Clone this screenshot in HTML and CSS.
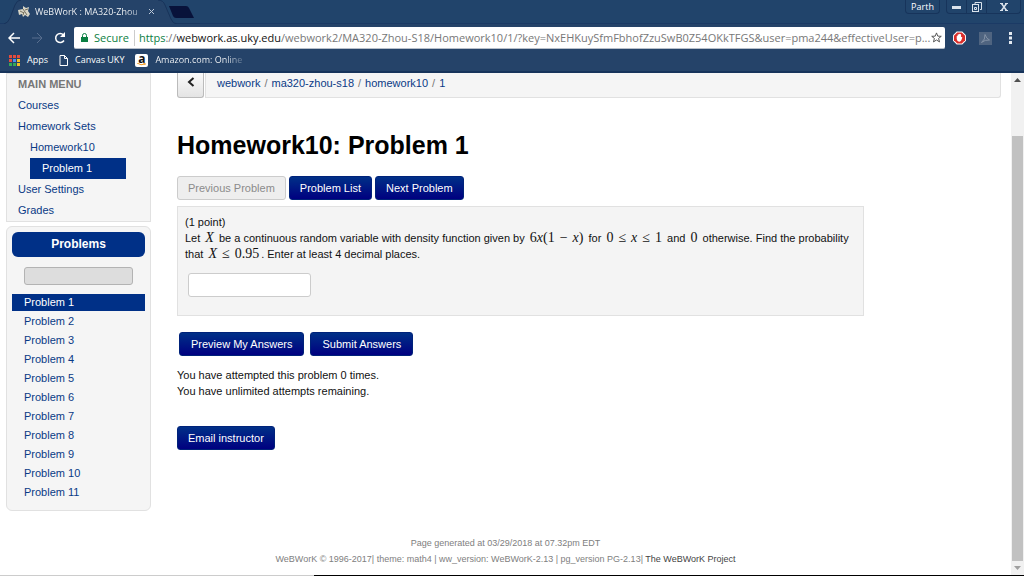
FILE: index.html
```html
<!DOCTYPE html>
<html lang="en">
<head>
<meta charset="utf-8">
<title>WeBWorK : MA320-Zhou-S18 : Homework10 : 1</title>
<link rel="stylesheet" href="styles.css">
</head>
<body>
<header class="browser">
  <div class="titlebar">
    <svg class="tab-shape" width="196" height="24" viewBox="0 0 196 24" aria-hidden="true">
      <path d="M0 24 Q4 23 6 18 L11 5 Q13 0 17 0 H154 Q159 0 161 5 L167 19 Q169 24 173 24Z" fill="#254369"/>
      <path d="M0 24 Q4 23 6 18 L11 5 Q13 0 17 0M154 0 Q159 0 161 5 L167 19 Q169 24 173 24H196" fill="none" stroke="#18335a"/>
      <path d="M165 6H182Q184 6 185 8L190 18H172Q170 18 169 16Z" fill="#08123a"/>
    </svg>
    <div class="tab">
      <svg width="12" height="12" viewBox="0 0 12 12" aria-hidden="true"><path d="M0 4 5 3 5 0 8 2 11 1 10 5 12 8 10 11 7 9 5 11 4 8 1 9Z" fill="#d8d5c6"/><path d="M2 5 6 7M5 3 9 9M7 4 10 3M5 9 6 6" stroke="#777260"/></svg>
      <span class="tab-title">WeBWorK : MA320-Zhou</span>
      <button class="plain tab-close" aria-label="Close tab"><svg width="7" height="7" viewBox="0 0 7 7"><path d="M1 1 6 6M6 1 1 6" stroke="#bdc9d8"/></svg></button>
    </div>
    <div class="window-tools">
      <button class="user">Parth</button>
      <div class="window-buttons">
        <button aria-label="Minimize"><svg width="9" height="9" viewBox="0 0 9 9"><path d="M0 4H9V7H0Z" fill="#dbe3ec"/></svg></button>
        <button aria-label="Restore"><svg width="10" height="10" viewBox="0 0 10 10" fill="none" stroke="#dbe3ec"><path d="M3 2.500V.5H9.500V7.500H8"/><rect x=".5" y="2.500" width="6" height="7"/><path d="M2.500 5.500H4.500V7.500H2.500Z"/></svg></button>
        <button class="close" aria-label="Close"><svg width="8" height="8" viewBox="0 0 8 8"><path d="M1.500 .5 6.500 7.500M6.500 .5 1.500 7.500" stroke="#dbe3ec" stroke-width="1.500"/><path d="M0 .5H3M5 .5H8M0 7.500H3M5 7.500H8" stroke="#dbe3ec"/></svg></button>
      </div>
    </div>
  </div>
  <div class="toolbar">
    <div class="nav-icons">
      <button class="plain" aria-label="Back"><svg width="12" height="12" viewBox="0 0 12 12"><path d="M6 1 1 6 6 11M1 6H12" fill="none" stroke="#fff" stroke-width="1.500"/></svg></button>
      <button class="plain" aria-label="Forward"><svg width="12" height="12" viewBox="0 0 12 12"><path d="M6 1 11 6 6 11M11 6H1" fill="none" stroke="#596f8f"/></svg></button>
      <button class="plain" aria-label="Reload"><svg width="12" height="12" viewBox="0 0 12 12"><path d="M10 8.500A4.500 4.500 0 1 1 9.500 3" fill="none" stroke="#fff" stroke-width="1.500"/><path d="M11 0V5H6Z" fill="#fff"/></svg></button>
    </div>
    <div class="omnibox">
      <svg width="7" height="9" viewBox="0 0 7 9" aria-hidden="true"><path d="M0 4H7V9H0Z" fill="#0b8043"/><path d="M1.500 4V2.500a2 2 0 0 1 4 0V4" fill="none" stroke="#0b8043"/></svg>
      <span class="secure">Secure</span>
      <div class="url" role="textbox" aria-label="Address" tabindex="0"><span class="scheme">https</span>://<span class="host">webwork.as.uky.edu</span>/webwork2/MA320-Zhou-S18/Homework10/1/?key=NxEHKuySfmFbhofZzuSwB0Z54OKkTFGS&amp;user=pma244&amp;effectiveUser=p...</div>
      <button class="plain" aria-label="Bookmark this page"><svg width="11" height="11" viewBox="0 0 12 12"><path d="M6 1 7.400 4.500 11.200 4.700 8.300 7 9.300 10.800 6 8.700 2.700 10.800 3.700 7 .8 4.700 4.600 4.500Z" fill="none" stroke="#4a4a4a"/></svg></button>
    </div>
    <div class="extensions">
      <button class="plain" aria-label="Ad blocker"><svg width="13" height="14" viewBox="0 0 14 14"><path d="M4 0H10L14 4V10L10 14H4L0 10V4Z" fill="#fff"/><path d="M4.500 1H9.500L13 4.500V9.500L9.500 13H4.500L1 9.500V4.500Z" fill="#d92c29"/><path d="M4 5Q4.500 4 5 5V3.500Q5.500 2.500 6 3.500Q6.500 1.500 7.500 3Q8.500 2 8.700 3.500V6Q10 5.500 10 6.500Q9 11 6.500 11Q4.500 11 4 8Z" fill="#fff"/></svg></button>
      <button class="plain" aria-label="PDF"><svg width="13" height="13" viewBox="0 0 13 13"><path d="M0 0H13V13H0Z" fill="#4f6480"/><path d="M6 2.500Q7.500 7 10.500 8Q6 7.500 2.500 10.500Q6.500 7.500 6 2.500Z" fill="none" stroke="#8392a6"/></svg></button>
      <button class="plain" aria-label="Menu"><svg width="3" height="12" viewBox="0 0 3 12" fill="#e4eaf1"><path d="M0 0H3V3H0ZM0 4.500H3V7.500H0ZM0 9H3V12H0Z"/></svg></button>
    </div>
  </div>
  <nav class="bookmarks" aria-label="Bookmarks">
    <a href="#"><svg width="11" height="11" viewBox="0 0 11 11" aria-hidden="true"><path d="M0 0H3V3H0ZM4 0H7V3H4ZM8 0H11V3H8ZM0 4H3V7H0Z" fill="#e54b3c"/><path d="M4 4H7V7H4Z" fill="#4a8df0"/><path d="M0 8H3V11H0ZM4 8H7V11H4Z" fill="#35a955"/><path d="M8 4H11V7H8ZM8 8H11V11H8Z" fill="#f3bd26"/></svg>Apps</a>
    <a href="#"><svg width="9" height="11" viewBox="0 0 9 11" aria-hidden="true"><path d="M1 .5H5.500L8.500 3.500V10.500H1ZM5.500 .5V3.500H8.500" fill="none" stroke="#fff"/></svg>Canvas UKY</a>
    <a href="#"><span class="amazon">a<svg width="9" height="3" viewBox="0 0 9 3"><path d="M0 0Q4 3 8 1M6 0H8V2" fill="none" stroke="#f19a20"/></svg></span><span class="amazon-title">Amazon.com: Online</span></a>
  </nav>
</header>

<div class="viewport">
  <div class="page">
    <div class="columns">
      <aside class="sidebar">
        <nav class="main-menu" aria-label="Main menu">
          <h2>MAIN MENU</h2>
          <a href="#">Courses</a>
          <a href="#">Homework Sets</a>
          <a class="level-2" href="#">Homework10</a>
          <a class="level-3 active" href="#">Problem 1</a>
          <a href="#">User Settings</a>
          <a href="#">Grades</a>
        </nav>
        <nav class="problems" aria-label="Problems">
          <h2>Problems</h2>
          <div class="progress"></div>
          <ul>
            <li><a class="active" href="#">Problem 1</a></li>
            <li><a href="#">Problem 2</a></li>
            <li><a href="#">Problem 3</a></li>
            <li><a href="#">Problem 4</a></li>
            <li><a href="#">Problem 5</a></li>
            <li><a href="#">Problem 6</a></li>
            <li><a href="#">Problem 7</a></li>
            <li><a href="#">Problem 8</a></li>
            <li><a href="#">Problem 9</a></li>
            <li><a href="#">Problem 10</a></li>
            <li><a href="#">Problem 11</a></li>
          </ul>
        </nav>
      </aside>
      <main class="content">
        <div class="trail">
          <button class="up" aria-label="Back to set"><svg width="8" height="10" viewBox="0 0 8 10"><path d="M6.500 1 2 5 6.500 9" fill="none" stroke="#222" stroke-width="2"/></svg></button>
          <nav class="breadcrumb" aria-label="Breadcrumb"><a href="#">webwork</a><span>/</span><a href="#">ma320-zhou-s18</a><span>/</span><a href="#">homework10</a><span>/</span><a href="#">1</a></nav>
        </div>
        <h1>Homework10: Problem 1</h1>
        <div class="problem-nav">
          <button class="btn" disabled>Previous Problem</button>
          <button class="btn">Problem List</button>
          <button class="btn">Next Problem</button>
        </div>
        <form>
          <section class="problem">
            <p>(1 point)</p>
            <p><label for="answer">Let <span class="math"><i>X</i></span> be a continuous random variable with density function given by <span class="math">6<i>x</i>(1<b>−</b><i>x</i>)</span> for <span class="math">0<b>≤</b><i>x</i><b>≤</b>1</span> and <span class="math">0</span> otherwise. Find the probability that <span class="math"><i>X</i><b>≤</b>0.95</span>. Enter at least 4 decimal places.</label></p>
            <input id="answer" type="text">
          </section>
          <div class="submit-row">
            <button type="button" class="btn">Preview My Answers</button>
            <button type="button" class="btn">Submit Answers</button>
          </div>
        </form>
        <p>You have attempted this problem 0 times.</p>
        <p>You have unlimited attempts remaining.</p>
        <button class="btn email">Email instructor</button>
      </main>
    </div>
    <footer>
      <p>Page generated at 03/29/2018 at 07.32pm EDT</p>
      <p>WeBWorK © 1996-2017| theme: math4 | ww_version: WeBWorK-2.13 | pg_version PG-2.13| <a href="#">The WeBWorK Project</a></p>
    </footer>
  </div>
  <div class="scrollbar" aria-hidden="true">
    <svg width="7" height="4" viewBox="0 0 7 4"><path d="M0 4 3.500 0 7 4Z" fill="#505050"/></svg>
    <div class="thumb"></div>
    <svg width="7" height="4" viewBox="0 0 7 4"><path d="M0 0H7L3.500 4Z" fill="#a0a0a0"/></svg>
  </div>
</div>
<div class="screen-edge"></div>
</body>
</html>
```
FILE: styles.css
```css
* { box-sizing: border-box; }
body {
  margin: 0;
  height: 100vh;
  display: flex;
  flex-direction: column;
  overflow: hidden;
  background: #fff;
  color: #111;
  font: 11px/16px "Liberation Sans", Arial, sans-serif;
}
a { color: #0a3a85; text-decoration: none; }
p, h1, h2, ul { margin: 0; padding: 0; }
ul { list-style: none; }
svg { display: block; flex: none; }
button { font: inherit; }
.plain { border: 0; padding: 0; background: none; }

/* Browser window */
.browser {
  background: #254369;
  border-bottom: 2px solid #17345b;
  color: #fff;
  font: 9px/14px "Open Sans", "Noto Sans", sans-serif;
}
.titlebar {
  position: relative;
  display: flex;
  justify-content: space-between;
  height: 24px;
  background: #21446b;
  border-bottom: 1px solid #1b3a65;
}
.tab-shape { position: absolute; left: 4px; top: 0; }
.tab {
  position: relative;
  display: flex;
  align-items: center;
  gap: 5px;
  padding-left: 18px;
}
.tab-title {
  min-width: 107px;
  white-space: nowrap;
  background: linear-gradient(90deg, #fff 85%, #6b819d);
  background-clip: text;
  color: transparent;
}
.tab-close { margin-left: 1px; }
.window-tools { display: flex; gap: 6px; height: 14px; padding-right: 3px; }
.user, .window-buttons {
  border: 1px solid #17345b;
  border-top: 0;
  border-radius: 0 0 4px 4px;
}
.user { width: 35px; padding: 0; background: none; color: #fff; line-height: 13px; }
.window-buttons { display: flex; }
.window-buttons button {
  display: flex;
  align-items: center;
  justify-content: center;
  width: 20px;
  padding: 0;
  border: 0;
  border-right: 1px solid #17345b;
  background: none;
}
.window-buttons .close { width: 33px; border-right: 0; }
.toolbar { display: flex; align-items: center; padding: 3px 12px 0 8px; }
.nav-icons { display: flex; gap: 11px; width: 66px; }
.omnibox {
  flex: 1;
  min-width: 0;
  display: flex;
  align-items: center;
  height: 22px;
  padding: 0 3px 0 7px;
  background: #fff;
  border-bottom: 1px solid #b7bfca;
  border-radius: 2px;
  font: 11px/16px "Open Sans", "Noto Sans", sans-serif;
}
.secure { padding: 0 5px 0 6px; border-right: 1px solid #ccc; color: #0b8043; }
.url { flex: 1; min-width: 0; padding-left: 4px; white-space: nowrap; color: #777; }
.scheme { color: #0b8043; }
.host { color: #111; }
.extensions { display: flex; align-items: center; gap: 13px; padding-left: 8px; }
.extensions .plain:last-child { margin-left: 4px; }
.bookmarks { display: flex; gap: 11px; height: 22px; padding: 0 9px; }
.bookmarks a { display: flex; align-items: center; gap: 7px; color: #fff; }
.amazon {
  display: flex;
  flex-direction: column;
  align-items: center;
  width: 13px;
  height: 13px;
  border-radius: 2px;
  background: #fff;
  color: #111;
  font: bold 12px/9px "Open Sans", sans-serif;
}
.amazon-title { background: linear-gradient(90deg, #fff 80%, #5f7591); background-clip: text; color: transparent; }

/* Page */
.viewport { flex: 1; min-height: 0; display: flex; }
.page { flex: 1; min-width: 0; display: flex; flex-direction: column; overflow: hidden; }
.columns { flex: 1; display: flex; gap: 26px; padding: 0 10px 0 6px; }
.sidebar { flex: none; width: 145px; }
.main-menu, .problems { background: #f5f5f5; border: 1px solid #e1e1e1; }
.main-menu { display: flex; flex-direction: column; line-height: 21px; padding-left: 11px; }
.main-menu h2 { font-size: 11px; line-height: 21px; color: #777; }
.level-2 { padding-left: 12px; }
.level-3 { margin: 0 24px 0 12px; padding-left: 12px; }
.active { background: #003087; }
a.active { color: #fff; }
.problems { margin-top: 4px; padding: 5px; border-radius: 6px; }
.problems h2 {
  border-radius: 6px;
  background: #003087;
  color: #fff;
  font-size: 12px;
  line-height: 25px;
  text-align: center;
}
.progress {
  height: 18px;
  margin: 10px 12px 9px;
  border: 1px solid #b3b3b3;
  border-radius: 3px;
  background: #ddd;
}
.problems ul { display: grid; gap: 2px; padding-bottom: 4px; }
.problems li a { display: block; padding-left: 12px; line-height: 17px; }

.content { flex: 1; min-width: 0; }
.trail { display: flex; gap: 1px; height: 25px; }
.up {
  width: 27px;
  display: flex;
  align-items: center;
  justify-content: center;
  padding: 0 0 6px;
  border: 1px solid #bbb;
  border-top: 0;
  border-radius: 0 0 3px 3px;
  background: linear-gradient(#fafafa, #e4e4e4);
}
.breadcrumb {
  flex: 1;
  padding: 2px 11px;
  background: #f5f5f5;
  border: 1px solid #e1e1e1;
  border-top: 0;
  border-radius: 0 0 3px 0;
}
.breadcrumb span { padding: 0 4px; color: #777; }
h1 { margin: 31px 0 15px; color: #000; font-size: 25px; line-height: 32px; }
.problem-nav { display: flex; gap: 3px; }
.btn {
  height: 24px;
  padding: 0 10px;
  border: 1px solid #00227a;
  border-radius: 3px;
  background: linear-gradient(#003087, #000080);
  color: #fff;
  line-height: 20px;
}
.btn:disabled { border-color: #ccc; background: #eee; color: #8b8b8b; }
.problem {
  width: 83.333%;
  margin-top: 6px;
  padding: 7px;
  padding-bottom: 18px;
  border: 1px solid #e1e1e1;
  background: #f4f4f4;
}
.problem p { padding-right: 4px; }
.problem input {
  display: block;
  width: 123px;
  height: 24px;
  margin: 11px 3px 0;
  border: 1px solid #ccc;
  border-radius: 3px;
  background: #fff;
}
.math { padding: 0 2px; font: 14px/14px "Liberation Serif", "Times New Roman", serif; white-space: nowrap; }
.math b { padding: 0 5px; font-weight: normal; }
.submit-row { display: flex; gap: 6px; padding: 16px 2px 11px; }
.submit-row .btn { padding: 0 11px; }
.email { margin-top: 27px; }
footer { padding-bottom: 8px; text-align: center; color: #808080; font-size: 9px; }
footer a { color: #444; }
.scrollbar {
  flex: none;
  width: 13px;
  display: flex;
  flex-direction: column;
  align-items: center;
  gap: 5px;
  padding: 5px 1px;
  background: #f1f1f1;
}
.thumb { flex: 1; width: 100%; margin-top: 49px; background: #c1c1c1; }
.screen-edge { flex: none; height: 1px; background: linear-gradient(90deg, #ccc 30.7%, #000 30.7%); }
```
